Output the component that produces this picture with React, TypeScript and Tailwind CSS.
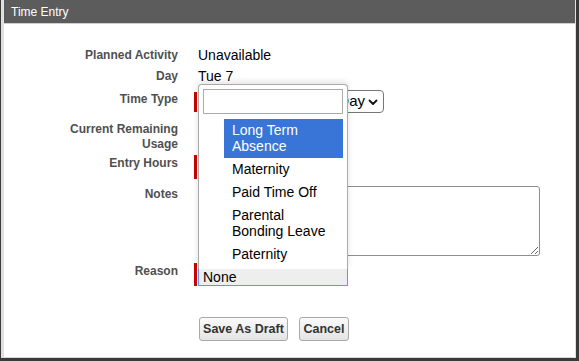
import React from "react";

const options = [
  { label: "Long Term Absence", active: true },
  { label: "Maternity" },
  { label: "Paid Time Off" },
  { label: "Parental Bonding Leave" },
  { label: "Paternity" },
];

function Req() {
  return <div className="w-[3px] bg-[#cc0000]" />;
}

function Label({ children, className = "" }: { children: React.ReactNode; className?: string }) {
  return (
    <div className={`w-[174px] shrink-0 text-right text-[12px] font-bold text-[#505050] ${className}`}>{children}</div>
  );
}

export default function App() {
  return (
    <div className="w-[579px] h-[361px] bg-[#3a3a3a] pl-[1px] pr-[3px] pb-[3px] font-['Liberation_Sans',Arial,sans-serif]">
      <div className="relative h-full bg-white border-l-[3px] border-r border-b border-l-[#e0e0e0] border-r-[#e0e0e0] border-b-[#d8d8d8] flex flex-col">
        <div className="h-[24px] shrink-0 bg-[#5c5c5c] border-b border-[#cfcfcf] text-white text-[12px] pl-[7px] flex items-center">
          Time Entry
        </div>

        <div className="pt-[21px] flex flex-col">
          <div className="flex h-[18px]">
            <Label className="leading-[18px] pt-[1px]">Planned Activity</Label>
            <div className="w-[20px]" />
            <div className="text-[14px] leading-[18px] pt-[1px] text-black">Unavailable</div>
          </div>

          <div className="flex h-[18px] mt-[3px]">
            <Label className="leading-[18px] pt-[1px]">Day</Label>
            <div className="w-[20px]" />
            <div className="text-[14px] leading-[18px] pt-[1px] text-black">Tue 7</div>
          </div>

          <div className="flex h-[24px] mt-[5px]">
            <Label className="leading-[18px] pt-[1px]">Time Type</Label>
            <div className="w-[20px] flex justify-end pr-[1px] pt-[3px]">
              <div className="h-[20px] flex">
                <Req />
              </div>
            </div>
            <div className="mt-[1px] w-[186px] h-[23px] border border-[#767676] rounded-[4px] bg-white flex items-center justify-end pr-[5px] gap-[3px] text-[15px] text-black">
              <span>Unpaid Day</span>
              <svg width="10" height="10" viewBox="0 0 10 10" fill="none">
                <path d="M1.5 3.5 L5 7 L8.5 3.5" stroke="#111" strokeWidth="1.8" strokeLinecap="round" strokeLinejoin="round" />
              </svg>
            </div>
          </div>

          <div className="flex mt-[7px] h-[29px]">
            <Label className="leading-[14.5px] pt-[2px]">
              Current Remaining
              <br />
              Usage
            </Label>
          </div>

          <div className="flex h-[24px] mt-[6px]">
            <Label className="leading-[13px] pt-[2px]">Entry Hours</Label>
            <div className="w-[20px] flex justify-end pr-[1px]">
              <Req />
            </div>
            <div className="w-[120px] h-[22px] border border-[#767676] rounded-[2px]" />
          </div>

          <div className="flex h-[70px] mt-[7px]">
            <Label className="leading-[14px] pt-[1px]">Notes</Label>
            <div className="w-[20px]" />
            <textarea
              readOnly
              className="w-[342px] h-[70px] border border-[#8f8f8f] rounded-[3px] outline-none text-[14px] bg-white"
            />
          </div>

          <div className="flex h-[23px] mt-[7px]">
            <Label className="leading-[12px] pt-[2px]">Reason</Label>
            <div className="w-[20px] flex justify-end pr-[1px]">
              <Req />
            </div>
          </div>

          <div className="flex mt-[31px] pl-[195px] gap-[11px]">
            <button className="w-[89px] h-[24px] border border-[#a9a9a9] rounded-[3px] bg-gradient-to-b from-[#fafafa] to-[#e4e4e4] text-[12.5px] font-bold text-[#333]">
              Save As Draft
            </button>
            <button className="w-[50px] h-[24px] border border-[#a9a9a9] rounded-[3px] bg-gradient-to-b from-[#fafafa] to-[#e4e4e4] text-[12.5px] font-bold text-[#333]">
              Cancel
            </button>
          </div>
        </div>

        <div className="absolute left-[194px] top-[84px] w-[150px] flex flex-col">
          <div className="h-[185px] border border-b-0 border-[#aaaaaa] rounded-t-[4px] bg-white shadow-[0_-2px_6px_rgba(0,0,0,0.12)] px-[4px] pt-[4px]">
            <div className="h-[25px] w-[140px] border border-[#aaaaaa] bg-white" />
            <ul className="mt-[5px] ml-[21px] text-[14px] text-black">
              {options.map((o) => (
                <li
                  key={o.label}
                  className={`pl-[8px] pr-[4px] pt-[3px] pb-[4px] leading-[16px] ${o.active ? "bg-[#3875d7] text-white" : ""}`}
                >
                  {o.label === "Long Term Absence" ? (
                    <>
                      Long Term
                      <br />
                      Absence
                    </>
                  ) : o.label === "Parental Bonding Leave" ? (
                    <>
                      Parental
                      <br />
                      Bonding Leave
                    </>
                  ) : (
                    o.label
                  )}
                </li>
              ))}
            </ul>
          </div>
          <div className="h-[17px] border border-t-0 border-[#5897fb] bg-[#eeeeee] pl-[4px] text-[14px] leading-[16px] text-black">
            None
          </div>
        </div>
      </div>
    </div>
  );
}
